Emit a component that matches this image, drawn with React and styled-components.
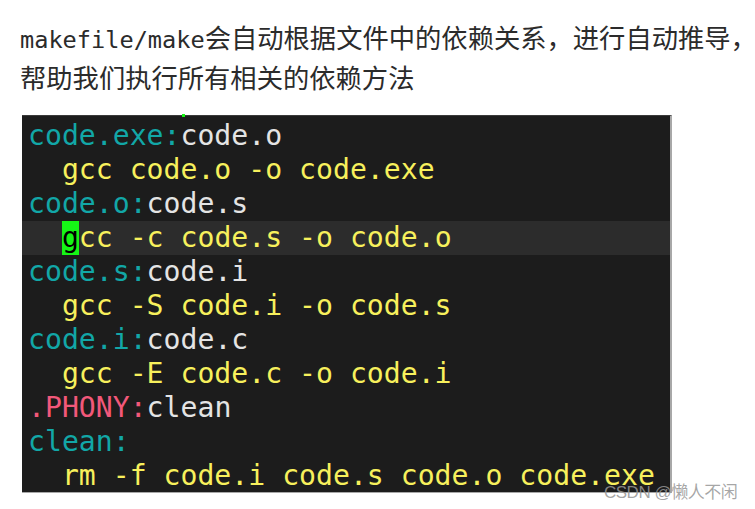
import React from 'react';
import styled, { createGlobalStyle } from 'styled-components';

const GlobalStyle = createGlobalStyle`
  body {
    margin: 0;
    background: #fff;
  }
`;

const Page = styled.div`
  position: relative;
  width: 755px;
  height: 509px;
  overflow: hidden;
  background: #fff;
`;

const Intro = styled.p`
  margin: 0;
  padding: 17px 0 0 20px;
  height: 80px;
  font-family: 'Noto Sans CJK SC', sans-serif;
  font-size: 26.3px;
  line-height: 40px;
  color: #2b2b2b;
  white-space: nowrap;
`;

const Mono = styled.span`
  font-family: 'DejaVu Sans Mono', monospace;
  font-size: 23.6px;
  line-height: 1;
`;

const Terminal = styled.div`
  position: relative;
  box-sizing: border-box;
  margin: 18px 0 0 22px;
  width: 650px;
  padding: 3px 0 0;
  height: 378px;
  background: #1c1c1c;
  border-top: 1px solid #3a3a3a;
  border-right: 2px solid #a8a8a8;
  border-bottom: 1px solid #a8a8a8;
  font-family: 'DejaVu Sans Mono', monospace;
  font-size: 28.15px;
  line-height: 34px;
`;

const Line = styled.div`
  height: 34px;
  padding-left: 6px;
  white-space: pre;
  background: ${(p) => (p.$active ? '#2c2c2c' : 'transparent')};
`;

const colors = {
  target: '#12a7a7',
  dep: '#e4e4e4',
  cmd: '#f7f05c',
  phony: '#f2587a',
};

const Tok = styled.span`
  color: ${(p) => colors[p.$kind]};
`;

const Cursor = styled.span`
  display: inline-block;
  height: 34px;
  vertical-align: top;
  background: #16f516;
  color: #000;
`;

const StrayMark = styled.span`
  position: absolute;
  left: 160px;
  top: -2px;
  width: 3px;
  height: 3px;
  background: #16f516;
`;

const Watermark = styled.div`
  position: absolute;
  left: 604px;
  top: 478px;
  font-family: 'Liberation Sans', 'Noto Sans CJK SC', sans-serif;
  font-size: 17px;
  color: rgba(150, 150, 150, 0.85);
  letter-spacing: -0.5px;
  white-space: nowrap;
`;

const lines = [
  [['target', 'code.exe:'], ['dep', 'code.o']],
  [['cmd', '  gcc code.o -o code.exe']],
  [['target', 'code.o:'], ['dep', 'code.s']],
  'cursor',
  [['target', 'code.s:'], ['dep', 'code.i']],
  [['cmd', '  gcc -S code.i -o code.s']],
  [['target', 'code.i:'], ['dep', 'code.c']],
  [['cmd', '  gcc -E code.c -o code.i']],
  [['phony', '.PHONY:'], ['dep', 'clean']],
  [['target', 'clean:']],
  [['cmd', '  rm -f code.i code.s code.o code.exe']],
];

export default function App() {
  return (
    <Page>
      <GlobalStyle />
      <Intro>
        <Mono>makefile/make</Mono>会自动根据文件中的依赖关系，进行自动推导，
        <br />
        帮助我们执行所有相关的依赖方法
      </Intro>
      <Terminal>
        <StrayMark />
        {lines.map((line, i) =>
          line === 'cursor' ? (
            <Line key={i} $active>
              <Tok $kind="cmd">{'  '}</Tok>
              <Cursor>g</Cursor>
              <Tok $kind="cmd">cc -c code.s -o code.o</Tok>
            </Line>
          ) : (
            <Line key={i}>
              {line.map(([kind, text], j) => (
                <Tok key={j} $kind={kind}>
                  {text}
                </Tok>
              ))}
            </Line>
          )
        )}
      </Terminal>
      <Watermark>CSDN @懒人不闲</Watermark>
    </Page>
  );
}
